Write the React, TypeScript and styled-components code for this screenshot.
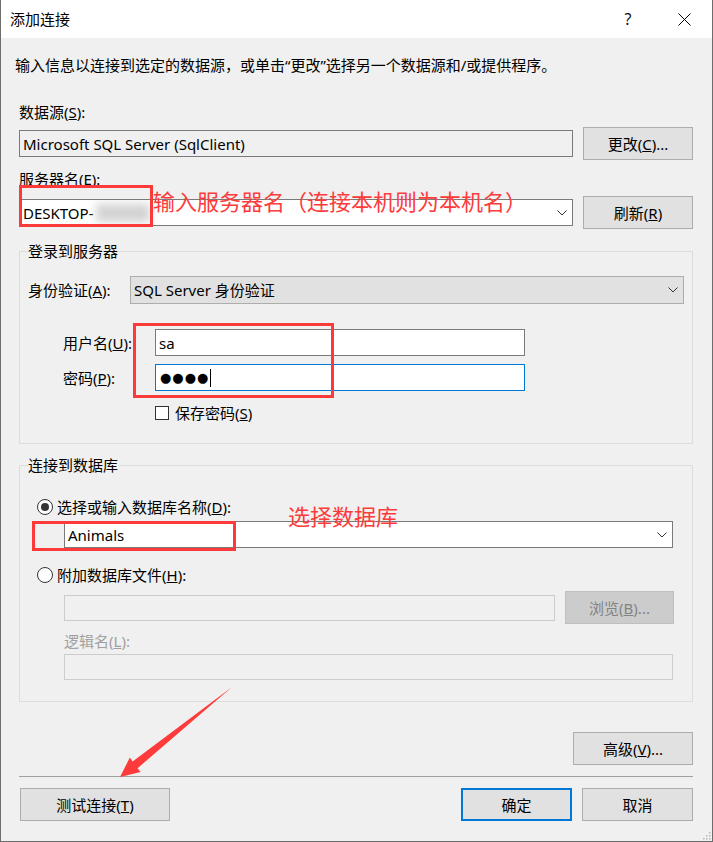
import React from "react";
import styled, { createGlobalStyle, css } from "styled-components";

const GlobalStyle = createGlobalStyle`
  html, body {
    margin: 0;
    padding: 0;
    background: #f0f0f0;
  }
  body {
    font-family: "Noto Sans", "Noto Sans CJK SC", sans-serif;
    font-size: 15px;
    color: #000;
  }
  * {
    box-sizing: border-box;
  }
`;

// 窗口外框
const Window = styled.div`
  position: relative;
  width: 713px;
  height: 842px;
  background: #f0f0f0;
  border: 1px solid #6d6d6d;
  border-top: none;
  display: flex;
  flex-direction: column;
  overflow: hidden;
`;

const TitleBar = styled.div`
  height: 38px;
  flex-shrink: 0;
  background: #fff;
  display: flex;
  align-items: center;
  padding-left: 9px;
`;

const TitleText = styled.div`
  flex: 1;
  line-height: 20px;
`;

const CaptionButton = styled.div`
  width: 56px;
  height: 38px;
  display: flex;
  align-items: center;
  justify-content: center;
  font-size: 16px;
  color: #111;
`;

const Body = styled.div`
  display: flex;
  flex-direction: column;
  padding: 0 19px 0 18px;
`;

const Instruction = styled.div`
  margin: 17px 0 0 -4px;
  line-height: 20px;
  white-space: nowrap;
`;

const Label = styled.div<{ $mt?: number; $w?: number; $ml?: number; $disabled?: boolean }>`
  line-height: 20px;
  white-space: nowrap;
  flex-shrink: 0;
  margin-top: ${({ $mt }) => $mt ?? 0}px;
  margin-left: ${({ $ml }) => $ml ?? 0}px;
  ${({ $w }) =>
    $w !== undefined &&
    css`
      width: ${$w}px;
    `}
  color: ${({ $disabled }) => ($disabled ? "#a0a0a0" : "#000")};
`;

const Row = styled.div<{ $mt?: number; $ml?: number; $mr?: number; $gap?: number }>`
  display: flex;
  align-items: center;
  gap: ${({ $gap }) => $gap ?? 10}px;
  margin-top: ${({ $mt }) => $mt ?? 0}px;
  margin-left: ${({ $ml }) => $ml ?? 0}px;
  margin-right: ${({ $mr }) => $mr ?? 0}px;
`;

type BoxKind = "normal" | "focus" | "disabled" | "readonly" | "locked";

const boxColors: Record<BoxKind, { bg: string; border: string }> = {
  normal: { bg: "#fff", border: "#7a7a7a" },
  focus: { bg: "#fff", border: "#0078d7" },
  disabled: { bg: "#f0f0f0", border: "#cccccc" },
  readonly: { bg: "#f0f0f0", border: "#7a7a7a" },
  locked: { bg: "#e1e1e1", border: "#adadad" },
};

const TextBox = styled.div<{ $kind?: BoxKind; $w?: number; $h?: number }>`
  display: flex;
  align-items: center;
  height: ${({ $h }) => $h ?? 27}px;
  padding: 0 5px 0 3px;
  line-height: 20px;
  white-space: nowrap;
  overflow: hidden;
  ${({ $w }) =>
    $w !== undefined
      ? css`
          width: ${$w}px;
          flex-shrink: 0;
        `
      : css`
          flex: 1;
          min-width: 0;
        `}
  background: ${({ $kind }) => boxColors[$kind ?? "normal"].bg};
  border: 1px solid ${({ $kind }) => boxColors[$kind ?? "normal"].border};
`;

const BoxText = styled.span`
  flex: 1;
  display: flex;
  align-items: center;
`;

const Blurred = styled.span`
  display: inline-block;
  width: 54px;
  height: 18px;
  margin-left: 3px;
  background: #d2d2d2;
  filter: blur(5px);
`;

const Dots = styled.span`
  font-family: "DejaVu Sans", sans-serif;
  font-size: 13px;
  letter-spacing: 1px;
  margin-left: 1px;
`;

const Caret = styled.span`
  display: inline-block;
  width: 1px;
  height: 18px;
  margin-left: 1px;
  background: #000;
`;

const Button = styled.div<{ $w: number; $primary?: boolean; $disabled?: boolean }>`
  width: ${({ $w }) => $w}px;
  height: 33px;
  flex-shrink: 0;
  display: flex;
  align-items: center;
  justify-content: center;
  line-height: 20px;
  background: ${({ $disabled }) => ($disabled ? "#cccccc" : "#e1e1e1")};
  border: ${({ $primary, $disabled }) =>
    $primary ? "2px solid #0078d7" : `1px solid ${$disabled ? "#bfbfbf" : "#adadad"}`};
  color: ${({ $disabled }) => ($disabled ? "#838383" : "#000")};
`;

const Group = styled.fieldset<{ $mt: number; $pt: number; $pb: number }>`
  margin: ${({ $mt }) => $mt}px 0 0;
  padding: ${({ $pt }) => $pt}px 8px ${({ $pb }) => $pb}px 8px;
  border: 1px solid #dcdcdc;
  min-width: 0;
  display: flex;
  flex-direction: column;
`;

const Legend = styled.legend`
  padding: 0;
  line-height: 20px;
`;

const CheckBox = styled.span`
  width: 14px;
  height: 14px;
  border: 1px solid #333;
  background: #fff;
  flex-shrink: 0;
`;

const Radio = styled.span<{ $checked?: boolean }>`
  width: 16px;
  height: 16px;
  border-radius: 50%;
  border: 1px solid #333;
  background: #fff;
  display: flex;
  align-items: center;
  justify-content: center;
  flex-shrink: 0;
  &::after {
    content: "";
    width: 8px;
    height: 8px;
    border-radius: 50%;
    background: ${({ $checked }) => ($checked ? "#333" : "transparent")};
  }
`;

const Spacer = styled.div`
  flex: 1;
`;

const Separator = styled.div`
  height: 1px;
  margin-top: 11px;
  background: #a0a0a0;
  flex-shrink: 0;
`;

const DialogButtons = styled.div`
  display: flex;
  align-items: center;
  gap: 10px;
  margin: 11px 0 0 1px;
`;

// 标注层（红框、红字、箭头）
const Annotations = styled.div`
  position: absolute;
  top: 0;
  left: -1px;
  width: 713px;
  height: 842px;
  pointer-events: none;
`;

const RedBox = styled.div<{ $x: number; $y: number; $w: number; $h: number }>`
  position: absolute;
  left: ${({ $x }) => $x}px;
  top: ${({ $y }) => $y}px;
  width: ${({ $w }) => $w}px;
  height: ${({ $h }) => $h}px;
  border: 3px solid #fd3a3a;
`;

const RedNote = styled.div<{ $x: number; $y: number }>`
  position: absolute;
  left: ${({ $x }) => $x}px;
  top: ${({ $y }) => $y}px;
  font-size: 22px;
  line-height: 26px;
  color: #fd3b3b;
  white-space: nowrap;
`;

const ArrowSvg = styled.svg`
  position: absolute;
  left: 0;
  top: 0;
`;

const Grip = styled.svg`
  position: absolute;
  right: 1px;
  bottom: 1px;
`;

const Chevron = () => (
  <svg width="10" height="6" viewBox="0 0 10 6">
    <polyline points="0.5,0.5 5,5 9.5,0.5" fill="none" stroke="#333" strokeWidth="1" />
  </svg>
);

const CloseIcon = () => (
  <svg width="13" height="13" viewBox="0 0 13 13">
    <line x1="0.5" y1="0.5" x2="12.5" y2="12.5" stroke="#000" strokeWidth="1" />
    <line x1="12.5" y1="0.5" x2="0.5" y2="12.5" stroke="#000" strokeWidth="1" />
  </svg>
);

const App: React.FC = () => {
  return (
    <>
      <GlobalStyle />
      <Window>
        <TitleBar>
          <TitleText>添加连接</TitleText>
          <CaptionButton>?</CaptionButton>
          <CaptionButton>
            <CloseIcon />
          </CaptionButton>
        </TitleBar>

        <Body>
          <Instruction>输入信息以连接到选定的数据源，或单击“更改”选择另一个数据源和/或提供程序。</Instruction>

          <Label $mt={27}>
            数据源(<u>S</u>):
          </Label>
          <Row $mt={5}>
            <TextBox $kind="readonly">Microsoft SQL Server (SqlClient)</TextBox>
            <Button $w={110}>
              更改(<u>C</u>)...
            </Button>
          </Row>

          <Label $mt={9}>
            服务器名(<u>E</u>):
          </Label>
          <Row $mt={7}>
            <TextBox>
              <BoxText>
                DESKTOP-
                <Blurred />
              </BoxText>
              <Chevron />
            </TextBox>
            <Button $w={110}>
              刷新(<u>R</u>)
            </Button>
          </Row>

          <Group $mt={12} $pt={15} $pb={20}>
            <Legend>登录到服务器</Legend>
            <Row $gap={0}>
              <Label $w={102}>
                身份验证(<u>A</u>):
              </Label>
              <TextBox $kind="locked" $h={28}>
                <BoxText>SQL Server 身份验证</BoxText>
                <Chevron />
              </TextBox>
            </Row>
            <Row $mt={25} $ml={35} $gap={0}>
              <Label $w={92}>
                用户名(<u>U</u>):
              </Label>
              <TextBox $w={370}>sa</TextBox>
            </Row>
            <Row $mt={8} $ml={35} $gap={0}>
              <Label $w={92}>
                密码(<u>P</u>):
              </Label>
              <TextBox $kind="focus" $w={370}>
                <Dots>●●●●</Dots>
                <Caret />
              </TextBox>
            </Row>
            <Row $mt={12} $ml={127} $gap={6}>
              <CheckBox />
              <Label>
                保存密码(<u>S</u>)
              </Label>
            </Row>
          </Group>

          <Group $mt={11} $pt={22} $pb={21}>
            <Legend>连接到数据库</Legend>
            <Row $ml={9} $gap={4}>
              <Radio $checked />
              <Label>
                选择或输入数据库名称(<u>D</u>):
              </Label>
            </Row>
            <Row $mt={4} $ml={36} $mr={11}>
              <TextBox>
                <BoxText>Animals</BoxText>
                <Chevron />
              </TextBox>
            </Row>
            <Row $mt={17} $ml={9} $gap={4}>
              <Radio />
              <Label>
                附加数据库文件(<u>H</u>):
              </Label>
            </Row>
            <Row $mt={6} $ml={36} $mr={10}>
              <TextBox $kind="disabled" $h={26} />
              <Button $w={109} $disabled>
                浏览(<u>B</u>)...
              </Button>
            </Row>
            <Label $mt={7} $ml={36} $disabled>
              逻辑名(<u>L</u>):
            </Label>
            <Row $mt={3} $ml={36} $mr={11}>
              <TextBox $kind="disabled" $h={26} />
            </Row>
          </Group>

          <Row $mt={30}>
            <Spacer />
            <Button $w={120}>
              高级(<u>V</u>)...
            </Button>
          </Row>

          <Separator />

          <DialogButtons>
            <Button $w={150}>
              测试连接(<u>T</u>)
            </Button>
            <Spacer />
            <Button $w={111} $primary>
              确定
            </Button>
            <Button $w={111}>取消</Button>
          </DialogButtons>
        </Body>

        <Annotations>
          <RedBox $x={19} $y={185} $w={134} $h={42} />
          <RedNote $x={153} $y={188}>输入服务器名（连接本机则为本机名）</RedNote>
          <RedBox $x={133} $y={323} $w={201} $h={75} />
          <RedBox $x={32} $y={521} $w={204} $h={30} />
          <RedNote $x={288} $y={503}>选择数据库</RedNote>
          <ArrowSvg width="713" height="842" viewBox="0 0 713 842">
            <polygon
              points="232,687 137.6,768.2 140.6,772 120,777 129.8,757.6 132.6,761.6"
              fill="#fd3b3b"
            />
          </ArrowSvg>
        </Annotations>

        <Grip width="8" height="8" viewBox="0 0 8 8">
          <rect x="6" y="0" width="1.5" height="1.5" fill="#b8b8b8" />
          <rect x="3" y="3" width="1.5" height="1.5" fill="#b8b8b8" />
          <rect x="6" y="3" width="1.5" height="1.5" fill="#b8b8b8" />
          <rect x="0" y="6" width="1.5" height="1.5" fill="#b8b8b8" />
          <rect x="3" y="6" width="1.5" height="1.5" fill="#b8b8b8" />
          <rect x="6" y="6" width="1.5" height="1.5" fill="#b8b8b8" />
        </Grip>
      </Window>
    </>
  );
};

export default App;
